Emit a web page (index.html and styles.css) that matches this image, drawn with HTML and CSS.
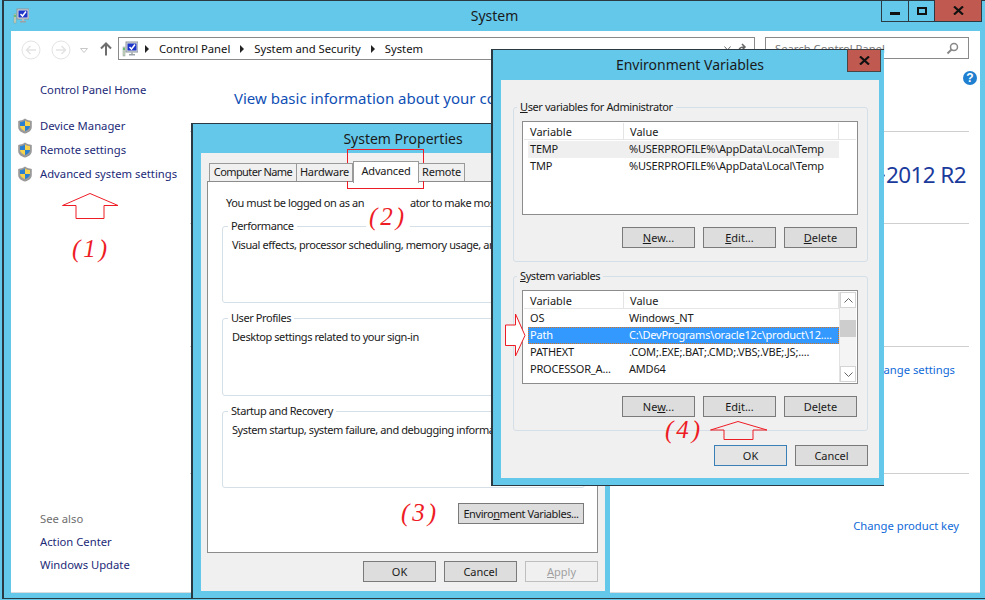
FILE: index.html
```html
<!DOCTYPE html>
<html lang="en">
<head>
<meta charset="utf-8">
<title>System</title>
<link rel="stylesheet" href="styles.css">
</head>
<body>
<svg class="defs" width="0" height="0">
  <defs>
    <g id="pc">
      <rect x="1" y="6" width="2" height="9" fill="#c9d8c4" stroke="#8a9a8a" stroke-width=".5"/>
      <rect x="1.4" y="7" width="1.2" height="2" fill="#35b34a"/>
      <rect x="4" y="1" width="12" height="10" fill="#d8dde2" stroke="#8d959c"/>
      <rect x="5.5" y="2.5" width="9" height="7" fill="#1b33c8"/>
      <path d="M7.5 6l2 2 3.5-4.5" fill="none" stroke="#fff" stroke-width="1.5"/>
      <path d="M7 13h6v1.5H7z" fill="#9aa2a8"/><path d="M9 11h2v2H9z" fill="#b5bbc0"/>
    </g>
    <g id="shield">
      <path d="M8 .6C6 2.2 3.6 2.8 1.2 2.9v6c0 3.3 3 5.5 6.8 6.6 3.8-1.1 6.8-3.3 6.8-6.6v-6C12.400 2.800 10 2.200 8 .6z" fill="#9a9a9a"/>
      <path d="M8 2.400C6.400 3.500 4.800 4 3 4.200V8h5z" fill="#2a7fd0"/>
      <path d="M8 2.400V8h5V4.200C11.200 4 9.600 3.500 8 2.400z" fill="#f7d24a"/>
      <path d="M3 8c.2 2.400 2.300 4 5 5V8z" fill="#f7d24a"/>
      <path d="M8 8v5c2.700-1 4.800-2.600 5-5z" fill="#2a7fd0"/>
    </g>
  </defs>
</svg>

<div class="desktop">
  <div class="window">
    <header class="titlebar">
      <svg class="title-icon" width="16" height="16" viewBox="0 0 16 16"><use href="#pc"/></svg>
      <div class="title">System</div>
      <div class="controls">
        <span class="ctl ctl-min"><i class="glyph-min"></i></span>
        <span class="ctl ctl-max"><i class="glyph-max"></i></span>
        <span class="ctl ctl-close"><svg width="11" height="9" viewBox="0 0 11 9"><path d="M1 .5l9 8M10 .5l-9 8" stroke="#111" stroke-width="2.200" fill="none"/></svg></span>
      </div>
    </header>
    <div class="client">
      <div class="toolbar">
        <svg class="nav-btn" width="20" height="20" viewBox="0 0 20 20"><circle cx="10" cy="10" r="9" fill="none" stroke="#e3e3e3"/><path d="M15 10H6M9.500 6l-4 4 4 4" fill="none" stroke="#e3e3e3" stroke-width="1.500"/></svg>
        <svg class="nav-btn" width="20" height="20" viewBox="0 0 20 20"><circle cx="10" cy="10" r="9" fill="none" stroke="#e3e3e3"/><path d="M5 10h9M10.500 6l4 4-4 4" fill="none" stroke="#e3e3e3" stroke-width="1.500"/></svg>
        <svg class="nav-drop" width="8" height="5" viewBox="0 0 8 5"><path d="M.5.500h7L4 4.500z" fill="#fff" stroke="#c8c8c8"/></svg>
        <svg class="nav-up" width="12" height="14" viewBox="0 0 12 14"><path d="M6 13.500V2M1 6.500L6 1.500l5 5" fill="none" stroke="#6d6d6d" stroke-width="2"/></svg>
        <div class="breadcrumb">
          <svg width="16" height="16" viewBox="0 0 16 16"><use href="#pc"/></svg>
          <span class="crumb-arrow first"></span><span>Control Panel</span>
          <span class="crumb-arrow"></span><span>System and Security</span>
          <span class="crumb-arrow"></span><span>System</span>
          <span class="crumb-tools">
            <svg width="7" height="5" viewBox="0 0 7 5"><path d="M.5.500L3.500 4l3-3.500" fill="none" stroke="#666"/></svg>
            <svg width="10" height="12" viewBox="0 0 10 12"><path d="M2 10c-1-4 1-6 5-6M5 1l3 3-3 3" fill="none" stroke="#666" stroke-width="1.500"/></svg>
          </span>
        </div>
        <div class="search">
          <span>Search Control Panel</span>
          <svg width="13" height="13" viewBox="0 0 13 13"><circle cx="8" cy="5" r="3.500" fill="none" stroke="#888" stroke-width="1.500"/><path d="M5.500 7.500L1.500 11.500" stroke="#888" stroke-width="2"/></svg>
        </div>
      </div>
      <div class="panes">
        <nav class="sidebar">
          <a class="side-home">Control Panel Home</a>
          <div class="side-tasks">
            <a class="side-task"><svg width="16" height="16" viewBox="0 0 16 16"><use href="#shield"/></svg>Device Manager</a>
            <a class="side-task"><svg width="16" height="16" viewBox="0 0 16 16"><use href="#shield"/></svg>Remote settings</a>
            <a class="side-task"><svg width="16" height="16" viewBox="0 0 16 16"><use href="#shield"/></svg>Advanced system settings</a>
          </div>
          <div class="see-also">
            <div class="see-label">See also</div>
            <a>Action Center</a>
            <a>Windows Update</a>
          </div>
        </nav>
        <main class="content">
          <div class="head-row">
            <h1>View basic information about your co</h1>
            <span class="help">?</span>
          </div>
          <section class="sec sec-edition"><span class="edition"><i class="reg"></i>2012 R2</span></section>
          <section class="sec sec-system"></section>
          <section class="sec sec-name"><a class="link link-settings">Change settings</a></section>
          <section class="sec sec-activation"><a class="link link-key">Change product key</a></section>
        </main>
      </div>
    </div>
  </div>

  <div class="dialog dlg-props">
    <div class="dlg-title">System Properties</div>
    <div class="dlg-body props-body">
      <div class="tabs">
        <span class="tab tab-name">Computer Name</span>
        <span class="tab tab-hw">Hardware</span>
        <span class="tab tab-adv">Advanced</span>
        <span class="tab tab-remote">Remote</span>
      </div>
      <div class="tab-panel">
        <p class="intro"><span class="intro-start">You must be logged on as an</span><span>ator to make most of these changes.</span></p>
        <fieldset class="group g-perf"><legend>Performance</legend><p>Visual effects, processor scheduling, memory usage, and virtual memory</p></fieldset>
        <fieldset class="group g-prof"><legend>User Profiles</legend><p>Desktop settings related to your sign-in</p></fieldset>
        <fieldset class="group g-start"><legend>Startup and Recovery</legend><p>System startup, system failure, and debugging information</p></fieldset>
        <div class="env-row"><button class="btn btn-env">Enviro<u>n</u>ment Variables...</button></div>
      </div>
      <div class="btn-row props-actions">
        <button class="btn">OK</button>
        <button class="btn">Cancel</button>
        <button class="btn btn-off"><u>A</u>pply</button>
      </div>
    </div>
  </div>

  <div class="dialog dlg-env">
    <div class="dlg-title">Environment Variables</div>
    <span class="dlg-close"><svg width="11" height="9" viewBox="0 0 11 9"><path d="M1 .5l9 8M10 .5l-9 8" stroke="#111" stroke-width="2.200" fill="none"/></svg></span>
    <div class="dlg-body env-body">
      <fieldset class="env-group">
        <legend><u>U</u>ser variables for Administrator</legend>
        <div class="list">
          <div class="list-head"><span>Variable</span><span>Value</span></div>
          <div class="list-row is-soft"><span>TEMP</span><span>%USERPROFILE%\AppData\Local\Temp</span></div>
          <div class="list-row"><span>TMP</span><span>%USERPROFILE%\AppData\Local\Temp</span></div>
        </div>
        <div class="btn-row env-btns">
          <button class="btn"><u>N</u>ew...</button>
          <button class="btn"><u>E</u>dit...</button>
          <button class="btn"><u>D</u>elete</button>
        </div>
      </fieldset>
      <fieldset class="env-group sys-group">
        <legend><u>S</u>ystem variables</legend>
        <div class="list">
          <div class="list-head"><span>Variable</span><span>Value</span></div>
          <div class="list-row"><span>OS</span><span>Windows_NT</span></div>
          <div class="list-row is-selected"><span>Path</span><span>C:\DevPrograms\oracle12c\product\12....</span></div>
          <div class="list-row"><span>PATHEXT</span><span>.COM;.EXE;.BAT;.CMD;.VBS;.VBE;.JS;....</span></div>
          <div class="list-row"><span>PROCESSOR_A...</span><span>AMD64</span></div>
          <div class="scrollbar">
            <span class="sb-btn"><svg width="9" height="5" viewBox="0 0 9 5"><path d="M.5 4.500l4-4 4 4" fill="none" stroke="#666"/></svg></span>
            <span class="sb-thumb"></span>
            <span class="sb-btn sb-down"><svg width="9" height="5" viewBox="0 0 9 5"><path d="M.5.500l4 4 4-4" fill="none" stroke="#666"/></svg></span>
          </div>
        </div>
        <div class="btn-row env-btns">
          <button class="btn">Ne<u>w</u>...</button>
          <button class="btn">Ed<u>i</u>t...</button>
          <button class="btn">De<u>l</u>ete</button>
        </div>
      </fieldset>
      <div class="btn-row env-actions">
        <button class="btn btn-default">OK</button>
        <button class="btn">Cancel</button>
      </div>
    </div>
  </div>

  <span class="red-box"></span>
  <span class="note note-1">(1)</span>
  <span class="note note-2">(2)</span>
  <span class="note note-3">(3)</span>
  <span class="note note-4">(4)</span>
  <svg class="arrow arrow-1" width="58" height="27" viewBox="0 0 58 27"><path d="M.5 12.500L28 .5l28 12H42v13H14v-13z" fill="#fff" stroke="#ee1c25"/></svg>
  <svg class="arrow arrow-path" width="21" height="45" viewBox="0 0 21 45"><path d="M20 22.500L10.500 1v11H.5v20.500h10V43z" fill="#fff" stroke="#ee1c25"/></svg>
  <svg class="arrow arrow-4" width="58" height="19" viewBox="0 0 58 19"><path d="M.5 9L28 .5 57 9H43v9.500H14V9z" fill="none" stroke="#ee1c25"/></svg>
</div>
</body>
</html>
```

FILE: styles.css
```css
* { box-sizing: border-box; }
html, body { margin: 0; padding: 0; }
body {
  width: 985px;
  height: 600px;
  overflow: hidden;
  font-family: "Noto Sans", "Open Sans", sans-serif;
  font-size: 11.25px;
  color: #1a1a1a;
}
.defs { position: absolute; }
.desktop {
  position: relative;
  width: 985px;
  height: 600px;
  overflow: hidden;
  background: #63c8ea;
  padding-left: 2px;
}
.window {
  height: 599px;
  border-top: 1px solid #2b3a42;
  border-left: 2px solid #2b3a42;
  border-bottom: 1px solid #2b3a42;
  display: flex;
  flex-direction: column;
}
.titlebar {
  height: 30px;
  flex: none;
  display: grid;
  grid-template-columns: 1fr auto 1fr;
  align-items: start;
}
.title-icon { margin: 7px 0 0 9px; }
.title {
  font-size: 14px;
  line-height: 30px;
  color: #1a1a1a;
}
.controls {
  justify-self: end;
  margin-right: 3px;
  margin-top: -1px;
  display: flex;
  height: 22px;
  border: 1px solid #2b3a42;
  border-top: 0;
}
.ctl { display: flex; align-items: center; justify-content: center; height: 21px; }
.ctl-min { width: 27px; border-right: 1px solid #2b3a42; }
.ctl-max { width: 26px; border-right: 1px solid #2b3a42; }
.ctl-close { width: 46px; background: #c05a50; }
.glyph-min { width: 10px; height: 3px; margin-top: 5px; background: #111; }
.glyph-max { width: 10px; height: 8px; border: 2px solid #111; }
.client {
  flex: 1;
  margin: 0 5px 5px 7px;
  background: #fff;
  border-bottom: 1px solid #d8dcdf;
  display: flex;
  flex-direction: column;
  min-height: 0;
}
.toolbar {
  height: 35px;
  flex: none;
  display: flex;
  align-items: flex-start;
  padding: 6px 0 0 10px;
}
.nav-btn { margin: 3px 10px 0 0; }
.nav-drop { margin: 11px 0 0 -1px; }
.nav-up { margin: 5px 0 0 12px; }
.breadcrumb {
  margin-left: 6px;
  width: 637px;
  height: 23px;
  border: 1px solid #8a8a8a;
  display: flex;
  align-items: center;
  padding-left: 3px;
  color: #111;
}
.crumb-arrow {
  width: 0; height: 0;
  margin: 0 10px;
  border-left: 4px solid #222;
  border-top: 4px solid transparent;
  border-bottom: 4px solid transparent;
}
.crumb-arrow.first { margin-left: 7px; }
.crumb-tools { margin-left: auto; display: flex; align-items: center; gap: 6px; padding-right: 7px; }
.search {
  margin-left: 10px;
  width: 204px;
  height: 22px;
  border: 1px solid #8a8a8a;
  display: flex;
  align-items: center;
  justify-content: space-between;
  padding: 0 9px;
  color: #777;
}
.panes { flex: 1; display: flex; min-height: 0; }
.sidebar {
  width: 179px;
  flex: none;
  display: flex;
  flex-direction: column;
  padding: 12px 0 16px 6px;
}
.sidebar a { color: #1c2a78; display: block; line-height: 24px; }
.side-home { padding-left: 23px; }
.side-tasks { margin-top: 12px; }
.side-task { display: flex !important; align-items: center; gap: 7px; }
.see-also { margin-top: auto; padding-left: 23px; }
.see-label { color: #6e6e6e; line-height: 22px; }
.see-also a { line-height: 23px; }
.content { flex: 1; min-width: 0; padding-right: 11px; display: flex; flex-direction: column; }
.head-row { height: 65px; display: flex; justify-content: space-between; flex: none; }
h1 {
  margin: 20px 0 0 44px;
  font-size: 15px;
  line-height: 24px;
  font-weight: 400;
  color: #0f4fb5;
  white-space: nowrap;
}
.help {
  width: 14px; height: 14px;
  margin: 5px -8px 0 0;
  border-radius: 50%;
  background: #1f7fd0;
  color: #fff;
  font: bold 12px/14px "Liberation Sans", sans-serif;
  text-align: center;
}
.sec { border-top: 1px solid #cfcfcf; flex: none; display: flex; justify-content: flex-end; }
.sec-edition { height: 92px; }
.edition {
  margin: 27px 3px 0 0;
  height: 32px;
  color: #1a3a9c;
  font-size: 22.5px;
  line-height: 32px;
  letter-spacing: -.6px;
  display: flex;
  align-items: center;
}
.reg { width: 3px; height: 3px; border: 1px solid #1a3a9c; border-radius: 50%; margin-right: 1px; }
.sec-system { height: 123px; }
.sec-name { height: 127px; }
.link { color: #0f6ad8; line-height: 20px; }
.link-settings { margin: 13px 14px 0 0; }
.link-key { margin: 42px 10px 0 0; }
.sec-activation { flex: 1; }

.dialog {
  position: absolute;
  border: 1px solid #2b3a42;
  border-width: 1px 0 1px 2px;
  background: #63c8ea;
  display: flex;
  flex-direction: column;
  font-size: 11px;
}
.dlg-props { left: 191px; top: 123px; width: 419px; height: 476px; padding: 0 5px 7px 8px; }
.dlg-env { left: 491px; top: 49px; width: 393px; height: 437px; padding: 0 5px 7px 8px; }
.dlg-title {
  height: 30px;
  flex: none;
  text-align: center;
  font-size: 14px;
  line-height: 30px;
  color: #1a1a1a;
}
.dlg-props .dlg-title { height: 29px; }
.dlg-close {
  position: absolute;
  right: 3px;
  top: -1px;
  width: 34px;
  height: 23px;
  background: #c05a50;
  border: 1px solid #4a4444;
  display: flex;
  align-items: center;
  justify-content: center;
}
.dlg-body { flex: 1; background: #f0f0f0; min-height: 0; }
.props-body { padding: 0 7px 0 6px; display: flex; flex-direction: column; }
.tabs { height: 28px; flex: none; display: flex; align-items: flex-end; padding-left: 2px; position: relative; z-index: 1; letter-spacing: -.2px; }
.tab {
  height: 18px;
  border: 1px solid #9a9a9a;
  border-bottom: 0;
  background: #f0f0f0;
  text-align: center;
  line-height: 16px;
  white-space: nowrap;
}
.tab-name { width: 88px; letter-spacing: -.6px; }
.tab-hw { width: 56px; border-left: 0; }
.tab-adv { width: 66px; height: 22px; margin-bottom: -2px; background: #fff; line-height: 18px; }
.tab-remote { width: 46px; border-left: 0; }
.tab-panel {
  height: 372px;
  flex: none;
  background: #fff;
  border: 1px solid #8c8c8c;
  padding: 12px 12px 0 18px;
  display: flex;
  flex-direction: column;
  letter-spacing: -.42px;
}
.intro { margin: 0; line-height: 18px; white-space: nowrap; display: flex; }
.intro-start { flex: none; width: 184px; }
.group {
  margin: 0;
  border: 1px solid #d5dfe7;
  border-radius: 3px;
  padding: 0 0 0 9px;
  min-width: 0;
  white-space: nowrap;
}
.group legend { padding: 0 3px; margin-left: -4px; line-height: 16px; }
.group p { margin: 2px 0 0; line-height: 18px; }
.g-perf { margin: 6px 0 0 -4px; height: 85px; }
.g-prof { margin: 7px 0 0 -4px; height: 86px; }
.g-start { margin: 7px 0 0 -4px; height: 85px; }
.env-row { display: flex; justify-content: flex-end; margin: 15px 1px 0 0; }
.btn {
  width: 73px;
  height: 21px;
  padding: 0;
  border: 1px solid #7a7a7a;
  background: #dddddd;
  font: inherit;
  letter-spacing: inherit;
  color: #1a1a1a;
  line-height: 18px;
  white-space: nowrap;
}
.btn-env { width: 126px; }
.btn-off { border-color: #bfbfbf; background: #f0f0f0; color: #a0a0a0; }
.btn-default { border-color: #3a7fb5; background: #e4e4e4; }
.btn-row { display: flex; justify-content: flex-end; gap: 8px; }
.props-actions { margin-top: 8px; }
.env-body { padding: 19px 11px 0 12px; display: flex; flex-direction: column; }
.env-group {
  margin: 0;
  height: 163px;
  border: 1px solid #d5dfe7;
  border-radius: 3px;
  padding: 0 9px 0 8px;
  min-width: 0;
}
.env-group legend { padding: 0 3px; margin-left: -5px; line-height: 16px; letter-spacing: -.4px; white-space: nowrap; }
.env-btns { margin-right: 1px; }
.sys-group { margin-top: 6px; }
.list {
  position: relative;
  height: 94px;
  margin: 6px 0 12px;
  background: #fff;
  border: 1px solid #8c8c8c;
  padding: 1px;
  overflow: hidden;
  white-space: nowrap;
}
.list-head {
  display: grid;
  grid-template-columns: 100px 215px;
  height: 17px;
  line-height: 17px;
  margin-bottom: 1px;
  border-bottom: 1px solid #e6e6e6;
}
.list-head span { padding-left: 6px; border-right: 1px solid #e4e4e4; }
.list-row {
  display: grid;
  grid-template-columns: 96px 1fr;
  width: 311px;
  height: 17px;
  line-height: 16px;
  margin-left: 4px;
  letter-spacing: -.2px;
}
.list-row span:first-child { padding-left: 2px; }
.list-row span:last-child { padding-left: 5px; }
.is-soft { background: #efefef; }
.is-selected { background: #3399ff; color: #fff; outline: 1px dotted #d9741c; outline-offset: -1px; }
.scrollbar {
  position: absolute;
  right: 1px;
  top: 1px;
  bottom: 1px;
  width: 17px;
  background: #f4f4f4;
  border-left: 1px solid #e2e2e2;
  display: flex;
  flex-direction: column;
}
.sb-btn { height: 16px; background: #fff; border: 1px solid #d4d4d4; display: flex; align-items: center; justify-content: center; flex: none; }
.sb-thumb { height: 17px; margin-top: 12px; background: #cdcdcd; flex: none; }
.sb-down { margin-top: auto; }
.env-actions { margin-top: 14px; }
.red-box {
  position: absolute;
  left: 347px; top: 149px; width: 77px; height: 40px;
  border: 1px solid #ee1c25;
}
.note {
  position: absolute;
  font-family: "Liberation Serif", serif;
  font-style: italic;
  font-size: 25px;
  line-height: 30px;
  letter-spacing: 3px;
  color: #ee1c25;
  white-space: nowrap;
}
.note-1 { left: 72px; top: 234px; }
.note-2 { left: 366px; top: 202px; width: 44px; height: 32px; background: #fff; text-align: center; }
.note-3 { left: 401px; top: 498px; }
.note-4 { left: 665px; top: 415px; }
.arrow { position: absolute; }
.arrow-1 { left: 62px; top: 193px; }
.arrow-path { left: 505px; top: 313px; }
.arrow-4 { left: 710px; top: 421px; }
```
